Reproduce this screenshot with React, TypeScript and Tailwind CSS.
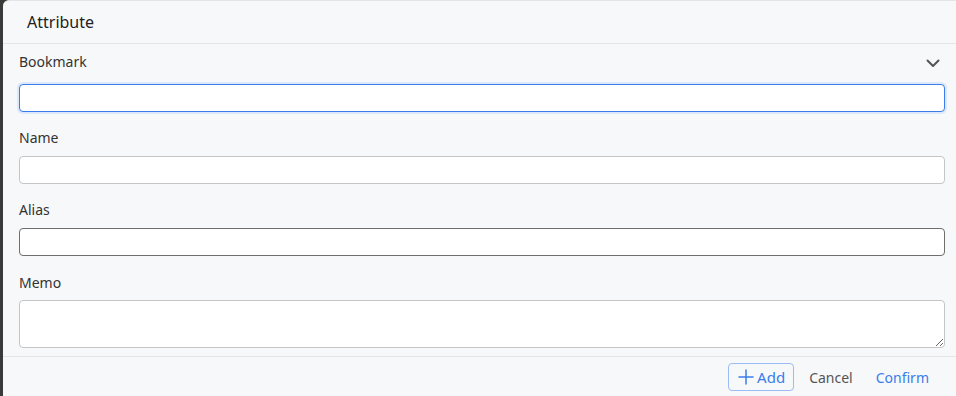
import React from 'react';

const font = { fontFamily: '"Segoe UI", "Noto Sans", "Liberation Sans", sans-serif' };

function Label({ children }: { children: React.ReactNode }) {
  return <div className="h-[28px] flex items-center text-[14px] text-[#333]">{children}</div>;
}

export default function App() {
  return (
    <div className="w-[956px] h-[396px] bg-[#3a3a3a] flex overflow-hidden" style={font}>
      <div className="ml-[3px] flex-1 bg-[#f7f8fa] rounded-tl-[6px] border-t border-[#e3e5e8] flex flex-col">
        {/* header */}
        <div className="h-[43px] flex items-center pl-[24px] text-[16px] text-[#222] border-b border-[#e4e6ea]">
          Attribute
        </div>

        {/* body */}
        <div className="pl-[16px] pr-[11px] flex flex-col">
          <div className="h-[35px] flex items-center justify-between pr-[4px]">
            <span className="text-[14px] text-[#333]">Bookmark</span>
            <svg width="16" height="16" viewBox="0 0 16 16" fill="none" className="mt-[3px]">
              <path d="M2.5 5.5 L8 11 L13.5 5.5" stroke="#555" strokeWidth="2" strokeLinecap="round" strokeLinejoin="round" />
            </svg>
          </div>
          <input
            autoFocus
            className="mt-[5px] h-[28px] w-full rounded-[4px] bg-white border border-[#3b7ceb] ring-2 ring-[#dde8fc] outline-none px-[6px] text-[14px] caret-black"
          />

          <div className="mt-[11px]">
            <Label>Name</Label>
          </div>
          <input className="mt-[5px] h-[28px] w-full rounded-[4px] bg-white border border-[#c3c5c9] outline-none px-[6px] text-[14px]" />

          <div className="mt-[11px]">
            <Label>Alias</Label>
          </div>
          <input className="mt-[5px] h-[28px] w-full rounded-[4px] bg-white border border-[#6e6e6e] outline-none px-[6px] text-[14px]" />

          <div className="mt-[12px]">
            <Label>Memo</Label>
          </div>
          <textarea className="mt-[4px] h-[48px] w-full rounded-[4px] bg-white border border-[#c3c5c9] outline-none px-[6px] text-[14px] block" />
        </div>

        {/* footer */}
        <div className="mt-[8px] border-t border-[#e4e6ea] flex-1 flex items-center justify-end pr-[27px] pt-[1px]">
          <button className="h-[28px] px-[8px] flex items-center gap-[2px] rounded-[4px] border border-[#9bbcf6] text-[#3b7ceb] text-[15px] bg-transparent">
            <svg width="18" height="18" viewBox="0 0 18 18" fill="none">
              <path d="M9 2 V16 M2 9 H16" stroke="#3b7ceb" strokeWidth="1.5" strokeLinecap="round" />
            </svg>
            Add
          </button>
          <button className="h-[28px] ml-[15px] text-[14px] text-[#555]">Cancel</button>
          <button className="h-[28px] ml-[23px] text-[14px] text-[#3b7ceb]">Confirm</button>
        </div>
      </div>
    </div>
  );
}
